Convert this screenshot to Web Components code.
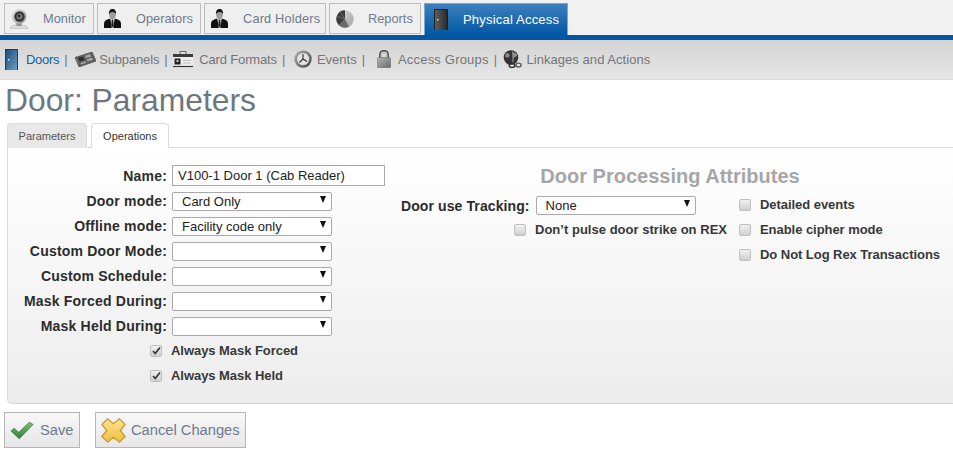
<!DOCTYPE html>
<html>
<head>
<meta charset="utf-8">
<title>Door: Parameters</title>
<style>
  html, body { margin: 0; padding: 0; background: #fff; height: 458px; overflow: hidden; }
  body { font-family: "Liberation Sans", Arial, sans-serif; }
</style>
</head>
<body>
<door-app></door-app>
<script>
// icons are all hand drawn, the originals were small pngs
const ICONS = {
  webcam: `<svg width="18" height="20" viewBox="0 0 18 20">
    <defs><linearGradient id="g" x1="0" y1="0" x2="1" y2="1"><stop offset="0" stop-color="#f0f0f0"/><stop offset="1" stop-color="#8c8c8c"/></linearGradient></defs>
    <path d="M0 20c.5-3 3.500-4 9-4s8.500 1 9 4z" fill="#dcdcdc" stroke="#aaa" stroke-width=".6"/>
    <rect x="6.500" y="13" width="5" height="4" fill="#8e8e8e"/>
    <circle cx="9" cy="7.500" r="7.500" fill="url(#g)"/>
    <circle cx="9.500" cy="7.500" r="5.200" fill="#333"/>
    <circle cx="9.500" cy="7.500" r="3" fill="#7b7b7b"/>
    <circle cx="9" cy="7" r="1.400" fill="#2b2b2b"/>
  </svg>`,
  person: `<svg width="17" height="19" viewBox="0 0 17 19">
    <path d="M0 19v-4.500c0-2.600 2.200-3.700 5.500-4.800h6c3.300 1.100 5.500 2.200 5.500 4.800v4.500z" fill="#111"/>
    <path d="M6.300 9.500h4.400l-1.500 9.500h-1.400z" fill="#e3e3e3"/>
    <path d="M7.800 10.500h1.400l.5 6-1.200 2-1.200-2z" fill="#222"/>
    <ellipse cx="8.500" cy="5.500" rx="3.300" ry="4.500" fill="#9c9c9c"/>
    <path d="M5 5.500c-.5-3.500 1.200-5.500 3.500-5.500s4 2 3.500 5.500c-.5-1.700-1.200-2.600-3.500-2.600s-3 .9-3.500 2.600z" fill="#141414"/>
  </svg>`,
  pie: `<svg width="18" height="18" viewBox="0 0 18 18">
    <defs><linearGradient id="p" x1="0" y1="0" x2="1" y2="1"><stop offset="0" stop-color="#dedede"/><stop offset="1" stop-color="#a0a0a0"/></linearGradient></defs>
    <circle cx="9" cy="9" r="8.700" fill="url(#p)"/>
    <path d="M9 9V.3A8.700 8.700 0 0 0 2.900 15.200z" fill="#3b3b3b"/>
    <path d="M9 9L.8 6.500M9 9L4 1.800" stroke="#7d7d7d" stroke-width=".7"/>
    <path d="M9 9l-6.100 6.200A8.700 8.700 0 0 0 13 16.700z" fill="#6a6a6a"/>
  </svg>`,
  doorDark: `<svg width="14" height="21" viewBox="0 0 14 21">
    <defs><linearGradient id="d" x1="0" y1="0" x2="1" y2="0"><stop offset="0" stop-color="#606060"/><stop offset="1" stop-color="#2a2a2a"/></linearGradient></defs>
    <rect width="14" height="21" fill="#1d1d1d"/>
    <rect x="1" y="1" width="12" height="20" fill="url(#d)"/>
    <rect x="3" y="10" width="1.500" height="1.500" fill="#ddd"/>
  </svg>`,
  doorBlue: `<svg width="13" height="21" viewBox="0 0 13 21">
    <defs><linearGradient id="d" x1="0" y1="0" x2="1" y2="1"><stop offset="0" stop-color="#1c4f7d"/><stop offset="1" stop-color="#6d9cc4"/></linearGradient></defs>
    <rect width="13" height="21" fill="#123f68"/>
    <rect x="1" y="1" width="11" height="20" fill="url(#d)"/>
    <rect x="3" y="10" width="1.500" height="1.500" fill="#e8eef3"/>
  </svg>`,
  panel: `<svg width="21" height="15" viewBox="0 0 21 15">
    <path d="M0 5.500L17 0l4 9-17 6z" fill="#5f5f5f" stroke="#3c3c3c" stroke-width=".6"/>
    <path d="M3 6l5-1.600 1.500 3.500-5 1.700z" fill="#2e2e2e"/>
    <path d="M10 3.700l5-1.500 1 2.300-5 1.500zM11.700 7.500l5.500-1.800.8 1.900-5.500 1.800zM5.500 11l5-1.700.6 1.500-5 1.700z" fill="#a8a8a8"/>
    <path d="M1.500 7l2 4.500M14 2.500l2.500 6" stroke="#cfcfcf" stroke-width=".6" stroke-dasharray="1 1"/>
  </svg>`,
  badge: `<svg width="20" height="17" viewBox="0 0 20 17">
    <rect x="7" y=".5" width="6" height="3" fill="none" stroke="#6a6a6a"/>
    <rect x="0" y="3" width="20" height="13.500" fill="#ededed"/>
    <rect x="0" y="3" width="20" height="3" fill="#3a3a3a"/>
    <rect x="1.500" y="7.500" width="6" height="6" fill="#222"/>
    <rect x="3.500" y="9" width="2" height="2" fill="#ccc"/>
    <path d="M10 9.500h8M10 12h8" stroke="#c4c4c4"/>
    <path d="M0 15.500h20" stroke="#333" stroke-width="1.200"/>
  </svg>`,
  clock: `<svg width="18" height="18" viewBox="0 0 18 18">
    <defs><linearGradient id="c" x1="0" y1="0" x2="1" y2="1"><stop offset="0" stop-color="#bdbdbd"/><stop offset="1" stop-color="#3a3a3a"/></linearGradient></defs>
    <circle cx="9" cy="9" r="8.700" fill="url(#c)"/>
    <circle cx="9" cy="9" r="6.500" fill="#e2e2e2" stroke="#666" stroke-width=".6"/>
    <path d="M9 4v5L5.500 12.500M9 9l4 2.500" stroke="#2a2a2a" stroke-width="1.100" fill="none"/>
  </svg>`,
  lock: `<svg width="14" height="18" viewBox="0 0 14 18">
    <defs><linearGradient id="l" x1="0" y1="0" x2="1" y2="1"><stop offset="0" stop-color="#b5b5b5"/><stop offset="1" stop-color="#6a6a6a"/></linearGradient></defs>
    <path d="M2.800 8V4.800C2.800 2 4.600.8 7 .8s4.200 1.200 4.200 4V8" fill="none" stroke="#4e4e4e" stroke-width="1.500"/>
    <path d="M4.700 8V5c0-1.400.9-2.200 2.300-2.200s2.300.8 2.300 2.200v3" fill="none" stroke="#aaa" stroke-width=".8"/>
    <rect x=".3" y="7.500" width="13.400" height="10.200" rx="1" fill="url(#l)" stroke="#777" stroke-width=".6"/>
  </svg>`,
  globe: `<svg width="19" height="19" viewBox="0 0 19 19">
    <circle cx="8" cy="7.500" r="7.300" fill="#333"/>
    <path d="M3 3c3 0 4 1 3.500 3S3 8 2 6.500M9 1.500c2 1 4 1 5 3s-2 2-3 3.500 1 3-1.500 5" fill="#8a8a8a"/>
    <ellipse cx="9" cy="15.500" rx="2.800" ry="1.900" fill="none" stroke="#2c2c2c" stroke-width="1.400"/>
    <ellipse cx="15.500" cy="15" rx="2.600" ry="1.900" fill="none" stroke="#555" stroke-width="1.400"/>
  </svg>`,
  check: `<svg width="24" height="19" viewBox="0 0 26 20">
    <defs><linearGradient id="k" x1="0" y1="0" x2="0" y2="1"><stop offset="0" stop-color="#7cc272"/><stop offset="1" stop-color="#2f7f35"/></linearGradient></defs>
    <path d="M1 10.500l3.500-3 5 4.500L21 1l4 2.500L10 19z" fill="url(#k)" stroke="#3a7a3d" stroke-width=".8" stroke-linejoin="round"/>
  </svg>`,
  cross: `<svg width="25" height="25" viewBox="0 0 25 25">
    <defs><linearGradient id="x" x1="0" y1="0" x2="0" y2="1"><stop offset="0" stop-color="#fbe58f"/><stop offset="1" stop-color="#edbd3d"/></linearGradient></defs>
    <path d="M6.500 .8L12.500 5.800 18.500 .8 24.200 6.500 19.200 12.500 24.200 18.500 18.500 24.200 12.500 19.200 6.500 24.200 .8 18.500 5.800 12.500 .8 6.500z" fill="url(#x)" stroke="#c99a35" stroke-width="1.200" stroke-linejoin="round"/>
  </svg>`
};

class DoorIcon extends HTMLElement {
  connectedCallback() {
    this.attachShadow({ mode: "open" });
    this.shadowRoot.innerHTML = `<style>:host{display:inline-flex;line-height:0}</style>` + ICONS[this.getAttribute("name")];
  }
}
customElements.define("door-icon", DoorIcon);

class MainTab extends HTMLElement {
  connectedCallback() {
    const icon = this.getAttribute("icon");
    this.attachShadow({ mode: "open" });
    this.shadowRoot.innerHTML = `
      <style>
        :host {
          display: flex;
          align-items: center;
          box-sizing: border-box;
          width: var(--w);
          height: 31px;
          border: 1px solid #bdbdbd;
          background: #efefef;
          color: #6f7a8c;
          font-size: 12.800px;
          white-space: nowrap;
        }
        :host([active]) {
          height: 32px;
          border-color: #7ea7cb;
          border-bottom: 0;
          background: linear-gradient(#3b80bc, #0257a4);
          color: #fff;
          font-size: 13px;
          letter-spacing: .2px;
        }
        .ico { width: 38px; flex: none; padding-left: var(--pad, 6px); box-sizing: border-box; display: flex; align-items: center; height: 100%; }
        :host([active]) .ico { padding-left: 9px; }
      </style>
      <span class="ico"><door-icon name="${icon}"></door-icon></span><slot></slot>`;
  }
}
customElements.define("main-tab", MainTab);

class SubLink extends HTMLElement {
  connectedCallback() {
    const icon = this.getAttribute("icon");
    const last = this.hasAttribute("last");
    this.attachShadow({ mode: "open" });
    this.shadowRoot.innerHTML = `
      <style>
        :host { display: flex; align-items: center; color: #74757a; font-size: 13px; letter-spacing: var(--ls, 0); white-space: nowrap; }
        :host([current]) { color: #0b5fa8; }
        .ico { display: flex; margin-right: var(--icon-gap, 5px); }
        .sep { color: #74757a; margin-left: 5px; margin-right: var(--sep-gap, 8px); letter-spacing: 0; }
      </style>
      <span class="ico"><door-icon name="${icon}"></door-icon></span><slot></slot>${last ? "" : '<span class="sep">|</span>'}`;
  }
}
customElements.define("sub-link", SubLink);

class TopNav extends HTMLElement {
  connectedCallback() {
    this.attachShadow({ mode: "open" });
    this.shadowRoot.innerHTML = `
      <style>
        :host { display: block; }
        .tabs {
          display: flex; align-items: flex-end; gap: 3px;
          height: 35px; padding-left: 4px; box-sizing: border-box;
          background: #f1f1f1;
        }
        .tabs main-tab { margin-bottom: 1px; }
        .tabs main-tab[active] { margin-bottom: 0; }
        .blue { height: 5px; background: #0256a4; }
        .sub {
          display: flex; align-items: center; box-sizing: border-box;
          height: 40px; padding-left: 5px; padding-bottom: 1px;
          background: linear-gradient(#d4d4d4, #e6e6e6);
          border-bottom: 1px solid #d9d9d9;
        }
      </style>
      <div class="tabs">
        <main-tab icon="webcam" style="--w:90px;--pad:5px">Monitor</main-tab>
        <main-tab icon="person" style="--w:104px">Operators</main-tab>
        <main-tab icon="person" style="--w:122px;letter-spacing:.15px">Card Holders</main-tab>
        <main-tab icon="pie" style="--w:92px">Reports</main-tab>
        <main-tab icon="doorDark" style="--w:144px" active>Physical Access</main-tab>
      </div>
      <div class="blue"></div>
      <div class="sub">
        <sub-link icon="doorBlue" current style="--icon-gap:8px;--sep-gap:7.600px;--ls:-.3px">Doors</sub-link>
        <sub-link icon="panel" style="--icon-gap:3px;--sep-gap:5.600px;--ls:-.15px">Subpanels</sub-link>
        <sub-link icon="badge" style="--icon-gap:6px;--sep-gap:8.600px;--ls:-.15px">Card Formats</sub-link>
        <sub-link icon="clock" style="--icon-gap:5px;--sep-gap:12.400px">Events</sub-link>
        <sub-link icon="lock" style="--icon-gap:6.500px;--sep-gap:6.400px;--ls:.2px">Access Groups</sub-link>
        <sub-link icon="globe" style="--icon-gap:4px;--ls:.05px" last>Linkages and Actions</sub-link>
      </div>`;
  }
}
customElements.define("top-nav", TopNav);

class DoorSelect extends HTMLElement {
  connectedCallback() {
    const value = this.getAttribute("value") || "";
    this.attachShadow({ mode: "open" });
    this.shadowRoot.innerHTML = `
      <style>
        :host {
          display: flex; align-items: center; box-sizing: border-box;
          width: 160px; height: 19px; padding: 0 9px 1px;
          border: 1px solid #a9a9a9; border-radius: 2px; background: #fff;
          color: #222; font-size: 13px; font-weight: normal; letter-spacing: 0;
          position: relative;
        }
        .arrow { position: absolute; right: 5px; top: 3px; width: 0; height: 0;
          border-left: 3.500px solid transparent; border-right: 3.500px solid transparent; border-top: 7px solid #111; }
      </style>
      <span>${value}</span><span class="arrow"></span>`;
  }
}
customElements.define("door-select", DoorSelect);

class DoorField extends HTMLElement {
  connectedCallback() {
    this.attachShadow({ mode: "open" });
    this.shadowRoot.innerHTML = `
      <style>
        :host { display: contents; }
        label { justify-self: end; padding-bottom: var(--label-pad, 1px); font-weight: bold; font-size: 14px; letter-spacing: .2px; color: #2c2c2c; align-self: center; white-space: nowrap; }
      </style>
      <label>${this.getAttribute("label")}</label><slot></slot>`;
  }
}
customElements.define("door-field", DoorField);

class DoorCheck extends HTMLElement {
  connectedCallback() {
    const checked = this.hasAttribute("checked");
    this.attachShadow({ mode: "open" });
    this.shadowRoot.innerHTML = `
      <style>
        :host { display: flex; align-items: center; gap: 9px; font-size: 13px; font-weight: bold; color: #383838; white-space: nowrap; height: 19px; letter-spacing: -.05px; }
        .box {
          box-sizing: border-box; width: 12px; height: 12px; flex: none; border: 1px solid #c0c0c0; border-radius: 2px;
          background: linear-gradient(#f0f0f0, #cfcfcf);
          display: flex; align-items: center; justify-content: center;
        }
      </style>
      <span class="box">${checked ? '<svg width="9" height="9" viewBox="0 0 9 9"><path d="M1 5l2.200 2.500L8 1.500" fill="none" stroke="#333" stroke-width="1.700"/></svg>' : ""}</span><slot></slot>`;
  }
}
customElements.define("door-check", DoorCheck);

class ActionButton extends HTMLElement {
  connectedCallback() {
    this.attachShadow({ mode: "open" });
    this.shadowRoot.innerHTML = `
      <style>
        :host {
          display: flex; align-items: center; box-sizing: border-box;
          width: var(--w); height: 36px; padding: 0 0 0 5px;
          border: 1px solid #b5b5b5;
          background: linear-gradient(#f8f8f8, #e6e6e6);
          color: #6f7a8c; font-size: 14.700px;
        }
        .ico { display: flex; margin-right: var(--gap, 5px); }
      </style>
      <span class="ico"><door-icon name="${this.getAttribute("icon")}"></door-icon></span><slot></slot>`;
  }
}
customElements.define("action-button", ActionButton);

class OperationsPanel extends HTMLElement {
  connectedCallback() {
    this.attachShadow({ mode: "open" });
    this.shadowRoot.innerHTML = `
      <style>
        :host {
          display: block; box-sizing: border-box; height: 257px; margin-left: 7px;
          border-top: 1px solid #dcdcdc; border-left: 1px solid #dcdcdc; border-bottom: 1px solid #d5d5d5;
          border-bottom-left-radius: 5px;
          background: linear-gradient(#fff 0, #f6f6f6 50%, #ececec 100%);
        }
        .cols { display: flex; }
        .left {
          display: grid; grid-template-columns: 159px auto; column-gap: 5px; row-gap: 6px;
          align-content: start; justify-items: start;
          padding-top: 17px; width: 392px; box-sizing: border-box;
        }
        input {
          box-sizing: border-box; width: 213px; height: 21px; padding: 0 5px; margin: 0;
          border: 1px solid #a9a9a9; background: #fff; font: 13px "Liberation Sans", Arial, sans-serif; color: #222;
          border-radius: 0; outline: 0;
        }
        .checks { grid-column: 1 / 3; margin: -1px 0 0 142px; display: grid; row-gap: 6px; }
        .right { flex: 1; padding-top: 16px; }
        h2 { margin: 0 0 8px; text-align: center; font-size: 20px; font-weight: bold; color: #a6a6a6; width: 540px; height: 24px; line-height: 24px; }
        .attrs { display: flex; }
        .track { width: 335px; flex: none; }
        .use { display: flex; align-items: center; gap: 6px; padding-left: 1px; font-size: 14px; font-weight: bold; color: #2c2c2c; letter-spacing: .1px; margin-bottom: 5px; white-space: nowrap; }
        .track door-check { margin-left: 114px; letter-spacing: .02px; }
        .flags { display: grid; row-gap: 6px; margin-left: 4px; margin-top: -1px; align-self: start; }
      </style>
      <div class="cols">
        <div class="left">
          <door-field label="Name:" style="--label-pad:0"><input value="V100-1 Door 1 (Cab Reader)"></door-field>
          <door-field label="Door mode:"><door-select value="Card Only"></door-select></door-field>
          <door-field label="Offline mode:"><door-select value="Facility code only"></door-select></door-field>
          <door-field label="Custom Door Mode:"><door-select></door-select></door-field>
          <door-field label="Custom Schedule:"><door-select></door-select></door-field>
          <door-field label="Mask Forced During:"><door-select></door-select></door-field>
          <door-field label="Mask Held During:"><door-select></door-select></door-field>
          <div class="checks">
            <door-check checked>Always Mask Forced</door-check>
            <door-check checked>Always Mask Held</door-check>
          </div>
        </div>
        <div class="right">
          <h2>Door Processing Attributes</h2>
          <div class="attrs">
            <div class="track">
              <div class="use"><span>Door use Tracking:</span><door-select value="None"></door-select></div>
              <door-check>Don’t pulse door strike on REX</door-check>
            </div>
            <div class="flags">
              <door-check>Detailed events</door-check>
              <door-check>Enable cipher mode</door-check>
              <door-check>Do Not Log Rex Transactions</door-check>
            </div>
          </div>
        </div>
      </div>`;
  }
}
customElements.define("operations-panel", OperationsPanel);

class DoorApp extends HTMLElement {
  connectedCallback() {
    this.attachShadow({ mode: "open" });
    this.shadowRoot.innerHTML = `
      <style>
        :host { display: block; font-family: "Liberation Sans", Arial, sans-serif; }
        h1 { margin: 0; padding: 0 0 0 5px; height: 42px; line-height: 40px; font-size: 31.800px; font-weight: normal; color: #6d7780; }
        .tabs { display: flex; gap: 4px; margin-left: 7px; height: 24px; margin-top: 1px; }
        .tab {
          box-sizing: border-box; height: 25px; display: flex; align-items: center; justify-content: center;
          border: 1px solid #dcdcdc; border-bottom: 0; border-radius: 4px 4px 0 0;
          font-size: 11px; color: #555;
        }
        .tab.off { width: 80px; background: #e8e8e8; }
        .tab.on { width: 78px; background: #fff; position: relative; z-index: 1; color: #333; }
        .actions { display: flex; gap: 15px; padding: 8px 0 0 4px; }
      </style>
      <top-nav></top-nav>
      <h1>Door: Parameters</h1>
      <div class="tabs"><div class="tab off">Parameters</div><div class="tab on">Operations</div></div>
      <operations-panel></operations-panel>
      <div class="actions">
        <action-button icon="check" style="--gap:6px;--w:76px">Save</action-button>
        <action-button icon="cross" style="--w:151px">Cancel Changes</action-button>
      </div>`;
  }
}
customElements.define("door-app", DoorApp);
</script>
</body>
</html>
